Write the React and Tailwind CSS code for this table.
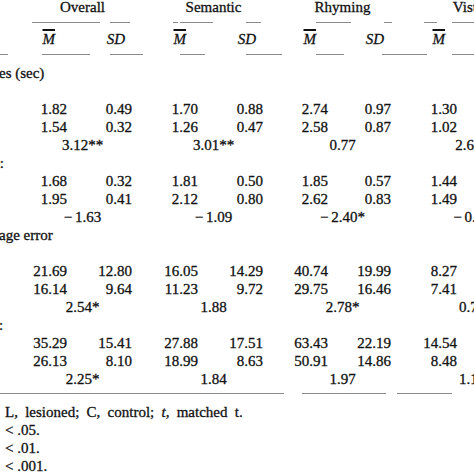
// App.jsx — scanned results table (cropped), rebuilt as flow layout
const groups = [
  { name: "Overall", w: "w-[131px]", pl: "pl-[32px]", sd: "w-[65px]" },
  { name: "Semantic", w: "w-[131px]", pl: "pl-[32px]", sd: "w-[65px]" },
  { name: "Rhyming", w: "w-[128px]", pl: "pl-[31px]", sd: "w-[63px]" },
  { name: "Visual", w: "w-[130px]", pl: "pl-[32px]", sd: "w-[63px]" },
];

const blocks = [
  {
    label: "Latencies (sec)",
    blank: true,
    rows: [
      ["1.82", "0.49", "1.70", "0.88", "2.74", "0.97", "1.30", "0.41"],
      ["1.54", "0.32", "1.26", "0.47", "2.58", "0.87", "1.02", "0.25"],
    ],
    t: ["3.12**", "3.01**", "0.77", "2.64*"],
  },
  {
    label: "Median:",
    rows: [
      ["1.68", "0.32", "1.81", "0.50", "1.85", "0.57", "1.44", "0.38"],
      ["1.95", "0.41", "2.12", "0.80", "2.62", "0.83", "1.49", "0.33"],
    ],
    t: ["\u2212\u20091.63", "\u2212\u20091.09", "\u2212\u20092.40*", "\u2212\u20090.26"],
  },
  {
    label: "Percentage error",
    blank: true,
    rows: [
      ["21.69", "12.80", "16.05", "14.29", "40.74", "19.99", "8.27", "6.12"],
      ["16.14", "9.64", "11.23", "9.72", "29.75", "16.46", "7.41", "5.83"],
    ],
    t: ["2.54*", "1.88", "2.78*", "0.78"],
  },
  {
    label: "Percent:",
    rows: [
      ["35.29", "15.41", "27.88", "17.51", "63.43", "22.19", "14.54", "9.20"],
      ["26.13", "8.10", "18.99", "8.63", "50.91", "14.86", "8.48", "6.02"],
    ],
    t: ["2.25*", "1.84", "1.97", "1.16"],
  },
];

// broken rule pieces as they came out of the scan: [from, to]
const ruleTop = [[32, 100], [110, 130], [173, 178], [180, 213], [246, 261], [316, 351], [384, 392], [424, 437], [452, 474]];
const ruleMid = [[0, 8], [42, 55], [55, 90], [110, 143], [180, 205], [246, 282], [316, 344], [382, 427], [452, 474]];
const ruleEnd = [[0, 284], [302, 386], [397, 452]];

function Rule({ pieces, className = "" }) {
  let x = 0;
  return (
    <div className={`flex h-px ${className}`}>
      {pieces.map(([a, b], i) => {
        const gap = a - x;
        x = b;
        return (
          <div key={i} className="flex shrink-0">
            <div style={{ width: gap }} />
            <div className="h-px bg-[#8a8a8a]" style={{ width: b - a }} />
          </div>
        );
      })}
    </div>
  );
}

function NumRow({ values }) {
  return (
    <div className="flex h-[18px] pl-[1px] leading-[18px]">
      {groups.map((g, i) => (
        <div key={g.name} className={`flex shrink-0 ${g.w} ${g.pl}`}>
          <div className="w-[34px] shrink-0 text-right">{values[i * 2]}</div>
          <div className={`${g.sd} shrink-0 text-right`}>{values[i * 2 + 1]}</div>
        </div>
      ))}
    </div>
  );
}

function TRow({ values }) {
  return (
    <div className="flex h-[18px] pl-[1px] leading-[18px]">
      {groups.map((g, i) => (
        <div key={g.name} className={`flex shrink-0 ${g.w} ${g.pl}`}>
          <div className="flex-1 whitespace-nowrap text-center">{values[i]}</div>
        </div>
      ))}
    </div>
  );
}

export default function App() {
  return (
    <div className="h-[474px] w-[474px] overflow-hidden bg-white text-[15px] text-[#111] [-webkit-text-stroke:0.3px_#111] font-['Liberation_Serif','Times_New_Roman',serif]">
      {/* group headers */}
      <div className="flex h-[14px] pl-[1px] leading-[14px]">
        {groups.map((g) => (
          <div key={g.name} className={`flex shrink-0 ${g.w} ${g.pl}`}>
            <div className="flex-1 whitespace-nowrap text-center">{g.name}</div>
          </div>
        ))}
      </div>
      <Rule pieces={ruleTop} className="mt-[8px]" />

      {/* M / SD */}
      <div className="mt-[7px] flex h-[18px] pl-[1px] leading-[18px] italic">
        {groups.map((g) => (
          <div key={g.name} className={`flex shrink-0 ${g.w} ${g.pl}`}>
            <div className="w-[34px] shrink-0 pr-[12px] text-right">
              <span className="overline decoration-[1.5px]">M</span>
            </div>
            <div className={`${g.sd} shrink-0 pr-[7px] text-right`}>SD</div>
          </div>
        ))}
      </div>
      <Rule pieces={ruleMid} className="mt-[6px]" />

      {/* body */}
      <div className="mt-[9px]">
        {blocks.map((b) => (
          <div key={b.label}>
            <div className="-ml-[46px] h-[18px] whitespace-nowrap leading-[18px]">{b.label}</div>
            {b.blank && <div className="h-[18px]" />}
            {b.rows.map((r, i) => (
              <NumRow key={i} values={r} />
            ))}
            <TRow values={b.t} />
          </div>
        ))}
      </div>
      <Rule pieces={ruleEnd} className="mt-[5px]" />

      {/* notes */}
      <div className="mt-[9px] pl-[5px] leading-[18px]">
        <p className="whitespace-nowrap [word-spacing:3.5px]">
          L, lesioned; C, control; <i>t</i>, matched t.
        </p>
        <p>&lt; .05.</p>
        <p>&lt; .01.</p>
        <p>&lt; .001.</p>
      </div>
    </div>
  );
}
